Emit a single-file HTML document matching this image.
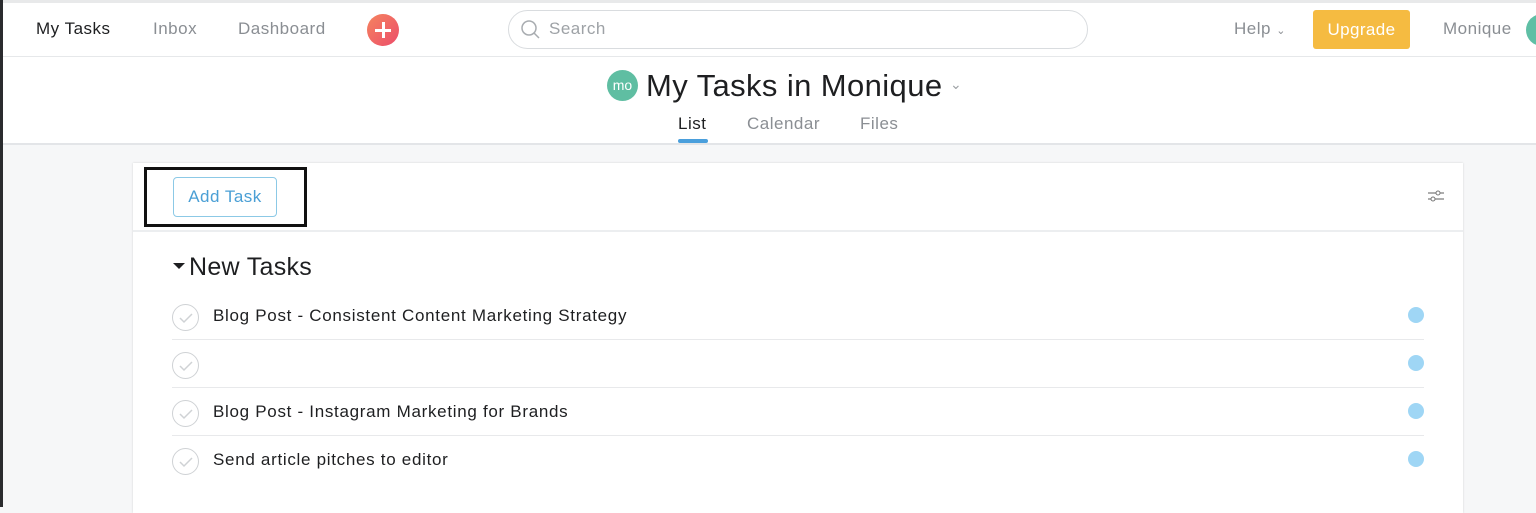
<!DOCTYPE html>
<html><head><meta charset="utf-8"><style>
*{margin:0;padding:0;box-sizing:border-box}
body{width:1536px;height:507px;overflow:hidden;background:#f6f7f8;font-family:"Liberation Sans",sans-serif;position:relative}
.a{position:absolute}
.top{left:0;top:0;width:1536px;height:57px;background:#fff;border-top:3px solid #e8e9ea;border-bottom:1px solid #e6e8ea}
.left{left:0;top:0;width:3px;height:507px;background:#2a2b2e;z-index:5}
.nav{font-size:17px;top:19px;letter-spacing:0.5px}
.hdr{left:0;top:57px;width:1536px;height:88px;background:#fff;border-bottom:2px solid #e3e5e8}
.card{left:133px;top:163px;width:1330px;height:350px;background:#fff;box-shadow:0 0 2px rgba(0,0,0,.15)}
.row{left:172px;width:1252px;height:48px;border-bottom:1px solid #e8e9eb}
.chk{position:absolute;left:0;top:12px;width:27px;height:27px;border:1.5px solid #cfd2d5;border-radius:50%}
.chk svg{position:absolute;left:6px;top:7px}
.tt{position:absolute;left:41px;top:14px;font-size:17px;color:#1e1f21;letter-spacing:0.7px}
.dot{position:absolute;right:0;top:15px;width:16px;height:16px;border-radius:50%;background:#9fd6f5}
</style></head><body>
<div class="a top"></div>
<div class="a left"></div>
<div class="a nav" style="left:36px;color:#1e1f21">My Tasks</div>
<div class="a nav" style="left:153px;color:#8a8e93">Inbox</div>
<div class="a nav" style="left:238px;color:#8a8e93">Dashboard</div>
<div class="a" style="left:367px;top:14px;width:32px;height:32px;border-radius:50%;background:linear-gradient(135deg,#f5845f,#ec4d6a)"></div>
<div class="a" style="left:375px;top:28.5px;width:16px;height:3px;background:#fff"></div>
<div class="a" style="left:381.5px;top:22px;width:3px;height:16px;background:#fff"></div>
<div class="a" style="left:508px;top:10px;width:580px;height:39px;border:1px solid #d9dcdf;border-radius:20px;background:#fff"></div>
<svg class="a" style="left:520px;top:19px" width="22" height="22"><circle cx="9" cy="9" r="7" fill="none" stroke="#a8acb0" stroke-width="1.5"/><line x1="14" y1="14" x2="19" y2="19" stroke="#a8acb0" stroke-width="1.5"/></svg>
<div class="a nav" style="left:549px;color:#9ea2a6">Search</div>
<div class="a nav" style="left:1234px;color:#8a8e93">Help <span style="font-size:11px">&#8964;</span></div>
<div class="a" style="left:1313px;top:10px;width:97px;height:39px;background:#f5bb41;border-radius:3px;color:#fff;font-size:17px;text-align:center;line-height:39px;letter-spacing:0.4px">Upgrade</div>
<div class="a nav" style="left:1443px;color:#8a8e93">Monique</div>
<div class="a" style="left:1526px;top:14px;width:32px;height:32px;border-radius:50%;background:#5fbfa5"></div>
<div class="a hdr"></div>
<div class="a" style="left:607px;top:70px;width:31px;height:31px;border-radius:50%;background:#5fbea2;color:#fff;font-size:14px;text-align:center;line-height:30px">mo</div>
<div class="a" style="left:646px;top:68px;font-size:31px;color:#1e1f21;letter-spacing:0.4px">My Tasks in Monique</div>
<div class="a" style="left:950px;top:76px;font-size:14px;color:#9ea2a6">&#8964;</div>
<div class="a" style="left:678px;top:114px;font-size:17px;color:#1e1f21;letter-spacing:0.5px">List</div>
<div class="a" style="left:678px;top:139px;width:30px;height:4px;background:#4a9fdc;border-radius:2px"></div>
<div class="a" style="left:747px;top:114px;font-size:17px;color:#8a8e93;letter-spacing:0.5px">Calendar</div>
<div class="a" style="left:860px;top:114px;font-size:17px;color:#8a8e93;letter-spacing:0.5px">Files</div>
<div class="a card"></div>
<div class="a" style="left:133px;top:230px;width:1330px;height:2px;background:#eceef0"></div>
<div class="a" style="left:144px;top:167px;width:163px;height:60px;border:3px solid #111"></div>
<div class="a" style="left:173px;top:177px;width:104px;height:40px;border:1.5px solid #8cc9e6;border-radius:4px;color:#4a9fd5;font-size:17px;text-align:center;line-height:37px;letter-spacing:0.5px">Add Task</div>
<svg class="a" style="left:1427px;top:188px" width="20" height="16"><line x1="1" y1="5" x2="17" y2="5" stroke="#777" stroke-width="1.2"/><line x1="1" y1="11" x2="17" y2="11" stroke="#777" stroke-width="1.2"/><circle cx="11" cy="5" r="2" fill="#fff" stroke="#777"/><circle cx="6" cy="11" r="2" fill="#fff" stroke="#777"/></svg>
<div class="a" style="left:173px;top:263px;width:0;height:0;border-left:6px solid transparent;border-right:6px solid transparent;border-top:6px solid #1e1f21"></div>
<div class="a" style="left:189px;top:253px;font-size:25px;color:#1e1f21;letter-spacing:0.3px">New Tasks</div>
<div class="a row" style="top:292px"><div class="chk"><svg width="14" height="12"><path d="M1 6l4 4 8-8" fill="none" stroke="#cfd2d5" stroke-width="1.5"/></svg></div><div class="tt">Blog Post - Consistent Content Marketing Strategy</div><div class="dot"></div></div>
<div class="a row" style="top:340px"><div class="chk"><svg width="14" height="12"><path d="M1 6l4 4 8-8" fill="none" stroke="#cfd2d5" stroke-width="1.5"/></svg></div><div class="dot"></div></div>
<div class="a row" style="top:388px"><div class="chk"><svg width="14" height="12"><path d="M1 6l4 4 8-8" fill="none" stroke="#cfd2d5" stroke-width="1.5"/></svg></div><div class="tt">Blog Post - Instagram Marketing for Brands</div><div class="dot"></div></div>
<div class="a row" style="top:436px;border-bottom:none"><div class="chk"><svg width="14" height="12"><path d="M1 6l4 4 8-8" fill="none" stroke="#cfd2d5" stroke-width="1.5"/></svg></div><div class="tt">Send article pitches to editor</div><div class="dot"></div></div>
</body></html>
